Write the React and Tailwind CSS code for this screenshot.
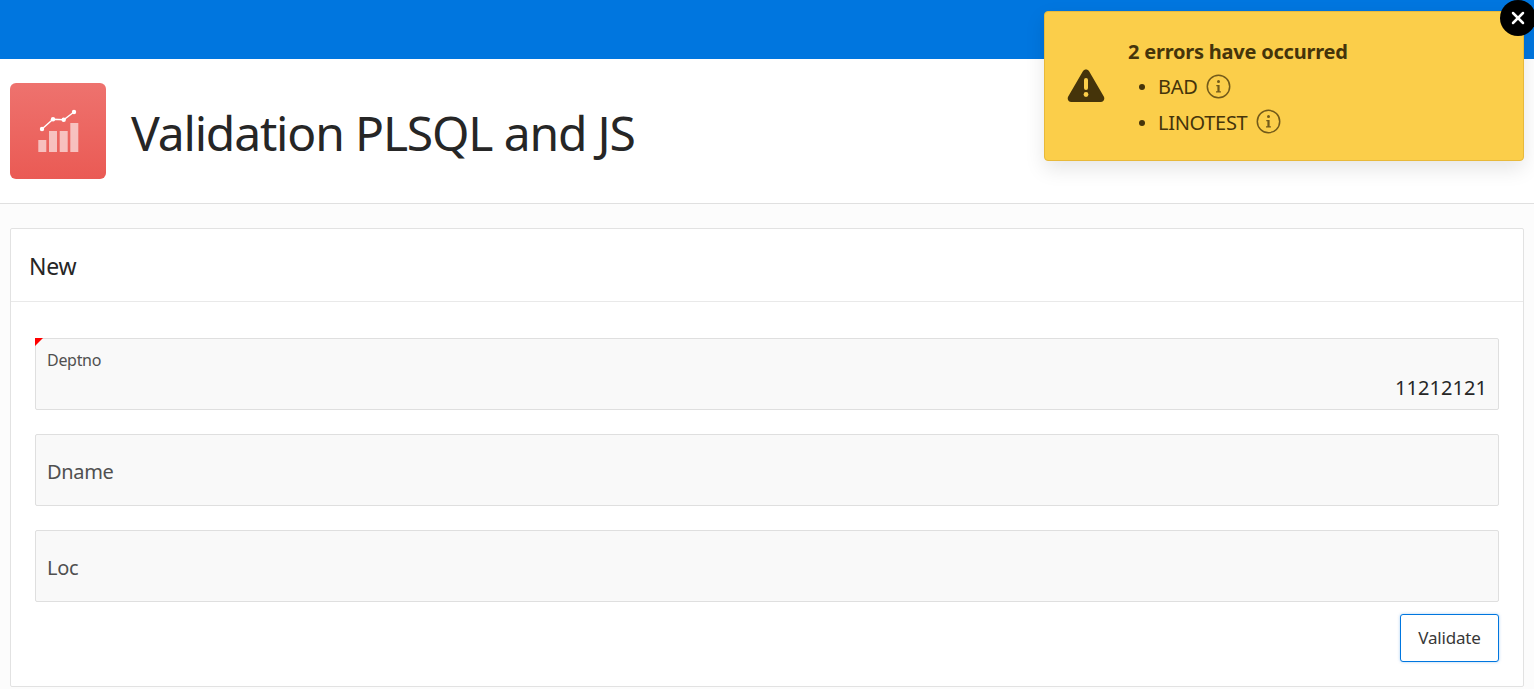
import { X } from 'lucide-react';

const font = 'font-["Noto_Sans",sans-serif]';

function Field({ label, value, required }) {
  if (value) {
    return (
      <div className="relative h-[72px] rounded-[2px] border border-[#dfdfdf] bg-[#f9f9f9] px-[11px] pt-[11px]">
        {required && (
          <span className="absolute -left-px -top-px h-0 w-0 border-r-[8px] border-t-[8px] border-r-transparent border-t-[#ff0000]" />
        )}
        <div className="text-[16px] leading-[20px] tracking-[-0.3px] text-[#505050]">{label}</div>
        <div className="mt-[6px] text-right text-[20px] leading-[24px] tracking-[0.05px] text-[#262626]">{value}</div>
      </div>
    );
  }
  return (
    <div className="flex h-[72px] items-center rounded-[2px] border border-[#dfdfdf] bg-[#f9f9f9] px-[11px] pt-[4px]">
      <span className="text-[20px] leading-[24px] tracking-[-0.35px] text-[#505050]">{label}</span>
    </div>
  );
}

function InfoIcon() {
  return (
    <svg width="25" height="25" viewBox="0 0 25 25" fill="none" className="-mt-[2px] ml-[9px] shrink-0 text-[#45340a] opacity-75">
      <circle cx="12.5" cy="12.5" r="11.2" stroke="currentColor" strokeWidth="1.5" />
      <circle cx="12.5" cy="7.6" r="1.5" fill="currentColor" />
      <path d="M10.3 10.9h3.3v6.4h1.3v1.3H10v-1.3h1.4v-5.1h-1.1z" fill="currentColor" />
    </svg>
  );
}

function ErrorItem({ text }) {
  return (
    <li className="flex h-[35.5px] items-center">
      <span className="mr-[13px] ml-[10px] h-[6px] w-[6px] rounded-full bg-[#45340a]" />
      <span className="text-[20px] leading-[26px] tracking-[-0.3px]">{text}</span>
      <InfoIcon />
    </li>
  );
}

function Notification() {
  return (
    <div className="absolute left-[1044px] top-[11px] flex h-[150px] w-[480px] items-center rounded-[4px] border border-[#e8b93a] bg-[#fbce4a] pl-[22px] text-[#45340a] shadow-[0_8px_20px_rgba(0,0,0,0.1)]">
      <svg width="38" height="33" viewBox="0 0 38 33" className="mb-[1px] shrink-0">
        <path
          d="M15.9 2.2c1.4-2.4 4.8-2.4 6.2 0l14.7 25.4c1.4 2.4-.3 5.4-3.1 5.4H4.3c-2.8 0-4.5-3-3.1-5.4z"
          fill="#45340a"
        />
        <rect x="17" y="9" width="4" height="12" rx="2" fill="#fbce4a" />
        <circle cx="19" cy="25.5" r="2.4" fill="#fbce4a" />
      </svg>
      <div className="ml-[23px] flex flex-col pt-[7px]">
        <div className="mb-[5px] text-[20px] font-bold leading-[26px] tracking-[-0.22px]">2 errors have occurred</div>
        <ul className="pl-[1px]">
          <ErrorItem text="BAD" />
          <ErrorItem text="LINOTEST" />
        </ul>
      </div>
      <button className="absolute -right-[13px] -top-[12px] flex h-[36px] w-[36px] items-center justify-center rounded-full bg-black text-white">
        <X size={20} strokeWidth={3} />
      </button>
    </div>
  );
}

function ChartLogo() {
  return (
    <div className="flex h-[96px] w-[96px] shrink-0 items-center justify-center rounded-[6px] bg-gradient-to-b from-[#ee726e] to-[#ea5a54]">
      <svg width="48" height="48" viewBox="0 0 48 48">
        <g fill="#ffffff" fillOpacity="0.6">
          <rect x="4.3" y="33" width="8" height="12" />
          <rect x="15" y="24" width="8" height="21" />
          <rect x="25.7" y="24" width="8" height="21" />
          <rect x="36.3" y="16" width="8" height="29" />
        </g>
        <path d="M8 22 19 12.3l10.7.5L40 5" fill="none" stroke="#fff" strokeWidth="1.4" />
        <g fill="#fff">
          <circle cx="8" cy="22" r="2.2" />
          <circle cx="19" cy="12.3" r="2.2" />
          <circle cx="29.7" cy="12.8" r="2.2" />
          <circle cx="40" cy="5" r="2.2" />
        </g>
      </svg>
    </div>
  );
}

export default function App() {
  return (
    <div className={`relative h-[689px] w-full overflow-hidden bg-[#fcfcfc] ${font}`}>
      <div className="h-[59px] bg-[#0076df]" />

      <div className="flex h-[145px] items-center border-b border-[#e0e0e0] bg-white pl-[10px]">
        <ChartLogo />
        <h1 className="ml-[25px] pt-[3px] text-[48px] leading-[60px] tracking-[-1.17px] text-[#262626]">Validation PLSQL and JS</h1>
      </div>

      <div className="mx-[10px] mt-[24px] h-[459px] rounded-[2px] border border-[#e2e2e2] bg-white">
        <div className="flex h-[73px] items-center border-b border-[#e9e9e9] pl-[18px] pt-[2px]">
          <h2 className="text-[23px] leading-[28px] tracking-[-0.3px] text-[#262626]">New</h2>
        </div>
        <div className="flex flex-col gap-[24px] px-[24px] pt-[36px]">
          <Field label="Deptno" value="11212121" required />
          <Field label="Dname" />
          <Field label="Loc" />
        </div>
        <div className="mt-[12px] flex justify-end px-[24px]">
          <button className="h-[48px] w-[99px] rounded-[3px] border border-[#0076df] bg-white text-[17px] tracking-[-0.2px] text-[#383838] shadow-[0_0_3px_rgba(0,118,223,0.35)]">
            Validate
          </button>
        </div>
      </div>

      <Notification />
    </div>
  );
}
